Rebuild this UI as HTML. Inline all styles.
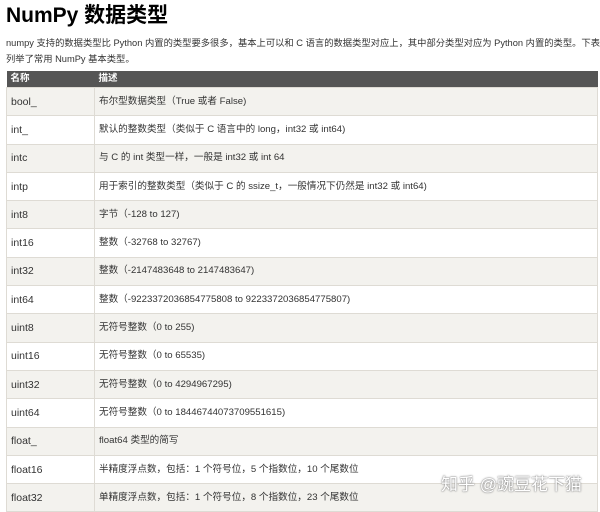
<!DOCTYPE html>
<html><head><meta charset="utf-8"><style>
body{margin:0;width:600px;height:507px;overflow:hidden;background:#fff;font-family:"Liberation Sans","Noto Sans CJK SC",sans-serif;color:#333}
h1{position:absolute;left:6px;top:2px;margin:0;font-size:21px;font-weight:bold;color:#000;line-height:28px}
.p{position:absolute;left:6px;font-size:9.3px;line-height:14px;white-space:nowrap;color:#333}
table{position:absolute;left:6px;top:71px;width:592px;border-collapse:collapse;font-size:9.6px;table-layout:fixed}
th{background:#555;color:#fff;text-align:left;height:16px;padding:0 0 0 4px;font-size:9.5px;font-weight:bold;border:none;line-height:16px}
td{height:27.3px;padding:0 0 0 4px;border:1px solid #dedbd4;white-space:nowrap;overflow:hidden;vertical-align:middle;line-height:14px}
td:first-child{font-size:10.5px}
tr:nth-child(odd) td{background:#f3f2ee}
tr:nth-child(even) td{background:#fff}
.wm{position:absolute;left:441px;top:470px;font-size:17px;color:#fff;text-shadow:0 0 2px #888,0 0 1px #666}
</style></head><body>
<h1>NumPy 数据类型</h1>
<div class="p" style="top:36px">numpy 支持的数据类型比 Python 内置的类型要多很多，基本上可以和 C 语言的数据类型对应上，其中部分类型对应为 Python 内置的类型。下表</div>
<div class="p" style="top:52px">列举了常用 NumPy 基本类型。</div>
<table>
<colgroup><col style="width:88px"><col></colgroup>
<thead><tr><th>名称</th><th>描述</th></tr></thead>
<tbody>
<tr><td>bool_</td><td>布尔型数据类型（True 或者 False)</td></tr>
<tr><td>int_</td><td>默认的整数类型（类似于 C 语言中的 long，int32 或 int64)</td></tr>
<tr><td>intc</td><td>与 C 的 int 类型一样，一般是 int32 或 int 64</td></tr>
<tr><td>intp</td><td>用于索引的整数类型（类似于 C 的 ssize_t，一般情况下仍然是 int32 或 int64)</td></tr>
<tr><td>int8</td><td>字节（-128 to 127)</td></tr>
<tr><td>int16</td><td>整数（-32768 to 32767)</td></tr>
<tr><td>int32</td><td>整数（-2147483648 to 2147483647)</td></tr>
<tr><td>int64</td><td>整数（-9223372036854775808 to 9223372036854775807)</td></tr>
<tr><td>uint8</td><td>无符号整数（0 to 255)</td></tr>
<tr><td>uint16</td><td>无符号整数（0 to 65535)</td></tr>
<tr><td>uint32</td><td>无符号整数（0 to 4294967295)</td></tr>
<tr><td>uint64</td><td>无符号整数（0 to 18446744073709551615)</td></tr>
<tr><td>float_</td><td>float64 类型的简写</td></tr>
<tr><td>float16</td><td>半精度浮点数，包括：1 个符号位，5 个指数位，10 个尾数位</td></tr>
<tr><td>float32</td><td>单精度浮点数，包括：1 个符号位，8 个指数位，23 个尾数位</td></tr>
</tbody></table>
<div class="wm">知乎 @豌豆花下猫</div>
</body></html>
